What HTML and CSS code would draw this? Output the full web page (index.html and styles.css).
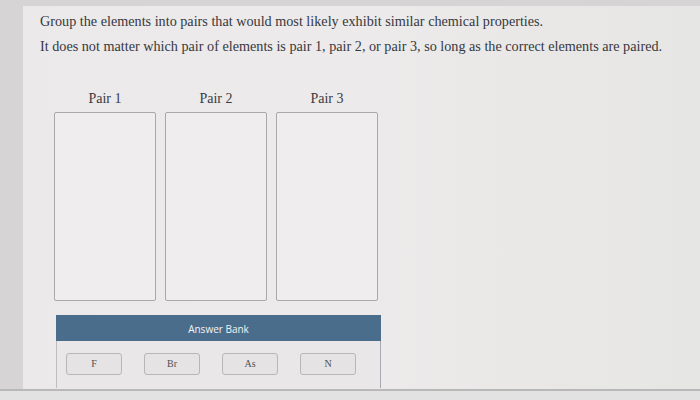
FILE: index.html
```html
<!DOCTYPE html>
<html>
<head>
<meta charset="utf-8">
<link rel="stylesheet" href="styles.css">
</head>
<body>
<div class="card">
  <p class="q q1">Group the elements into pairs that would most likely exhibit similar chemical properties.</p>
  <p class="q q2">It does not matter which pair of elements is pair 1, pair 2, or pair 3, so long as the correct elements are paired.</p>
  <div class="pairs">
    <div class="pair"><div class="label">Pair 1</div><div class="drop"></div></div>
    <div class="pair"><div class="label">Pair 2</div><div class="drop"></div></div>
    <div class="pair"><div class="label">Pair 3</div><div class="drop"></div></div>
  </div>
  <div class="bank">
    <div class="bank-head">Answer Bank</div>
    <div class="bank-body">
      <div class="chip">F</div>
      <div class="chip">Br</div>
      <div class="chip">As</div>
      <div class="chip">N</div>
    </div>
  </div>
</div>
<div class="footer"></div>
</body>
</html>
```
FILE: styles.css
```css
html, body {
  margin: 0;
  padding: 0;
}
body {
  width: 700px;
  height: 400px;
  overflow: hidden;
  background: #d6d4d4;
  font-family: "Liberation Serif", "Times New Roman", serif;
  color: #36383e;
}
.card {
  margin: 6px 0 0 23px;
  height: 383px;
  background: linear-gradient(90deg, #ebe9e9 0%, #eceaea 50%, #e6e6e4 100%);
  padding: 7px 0 0 17px;
  box-sizing: border-box;
}
.q {
  margin: 0;
  font-size: 14.2px;
  line-height: 16px;
}
.q2 {
  margin-top: 9px;
}
.pairs {
  display: flex;
  gap: 9px;
  margin: 37px 0 0 14px;
}
.pair {
  width: 102px;
  display: flex;
  flex-direction: column;
  align-items: center;
}
.label {
  font-size: 14px;
  line-height: 16px;
  color: #3a3b40;
}
.drop {
  margin-top: 5px;
  width: 100px;
  height: 187px;
  border: 1px solid #a9a9a9;
  border-radius: 2px;
  background: #efeded;
}
.bank {
  margin: 14px 0 0 16px;
  width: 325px;
}
.bank-head {
  height: 26px;
  background: #4b6d8c;
  color: #f2f4f6;
  font-family: "Open Sans", "Liberation Sans", sans-serif;
  font-size: 10px;
  line-height: 28px;
  text-align: center;
}
.bank-body {
  height: 47px;
  box-sizing: border-box;
  border-left: 1px solid #bdbcc0;
  border-right: 1px solid #a8a8b0;
  display: flex;
  gap: 22px;
  padding: 12px 0 0 9px;
  background: #e9e7e7;
}
.chip {
  width: 56px;
  height: 22px;
  box-sizing: border-box;
  border: 1px solid #b8b6b6;
  border-radius: 3px;
  background: #e5e3e3;
  font-size: 10px;
  line-height: 20px;
  text-align: center;
  color: #505156;
}
.footer {
  height: 11px;
  border-top: 2px solid #b9b8b8;
  background: #e3e2e2;
}
```
